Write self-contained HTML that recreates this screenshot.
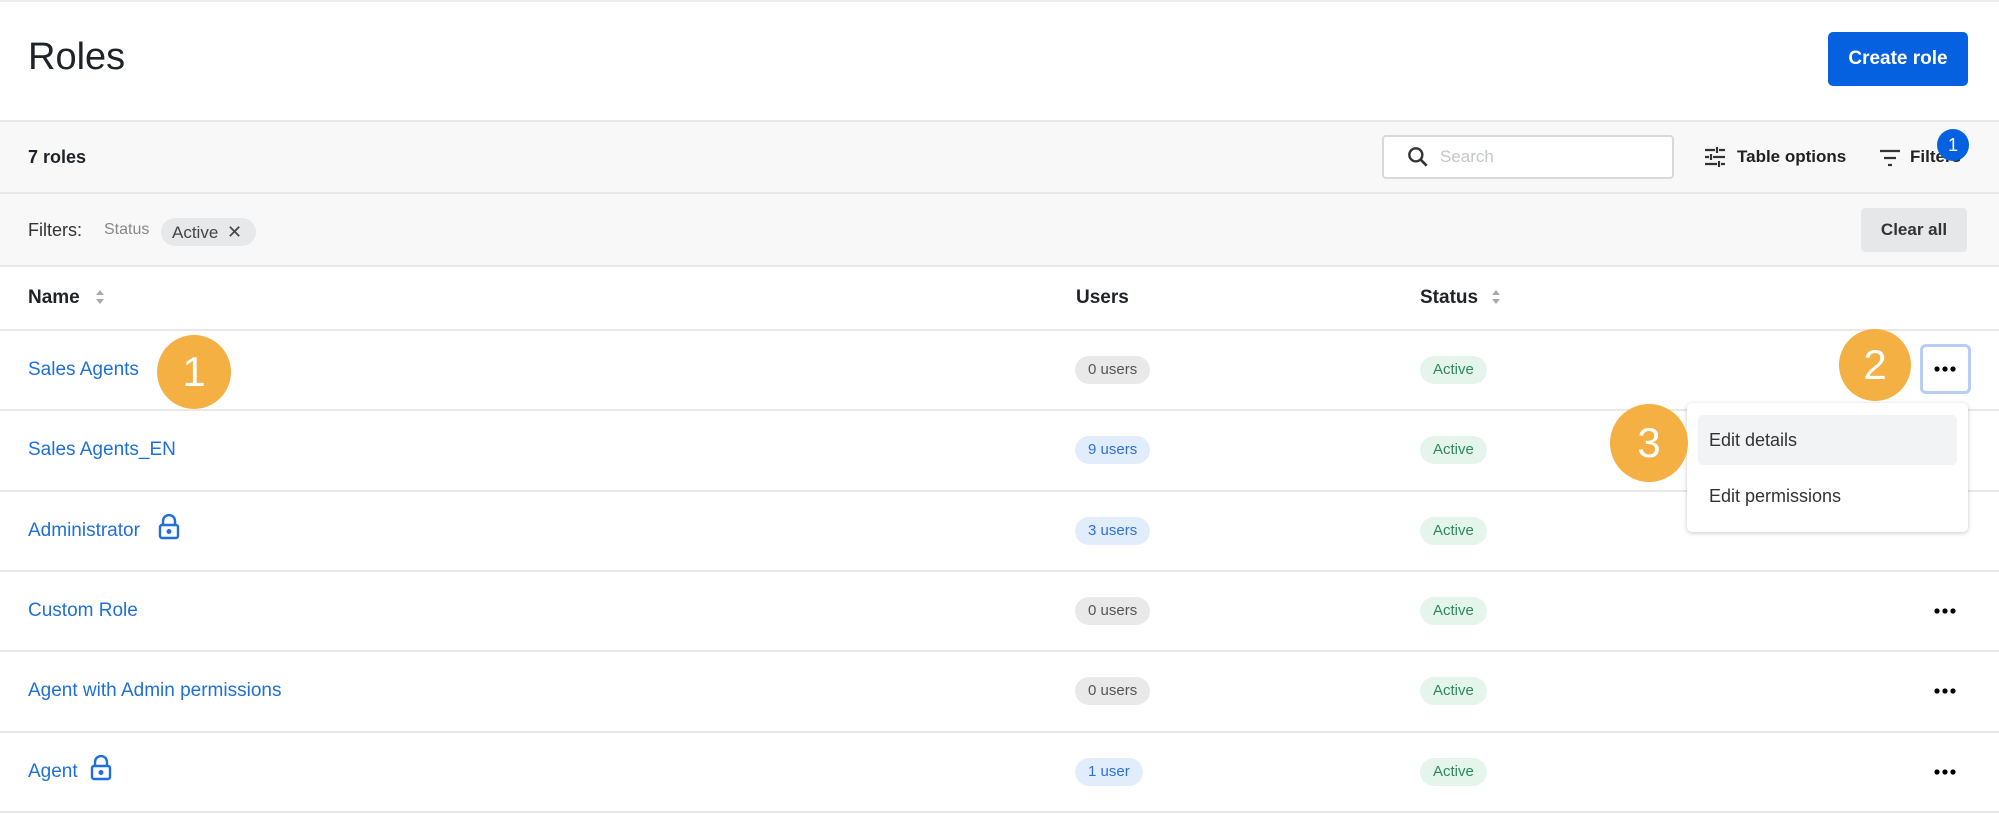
<!DOCTYPE html>
<html><head><meta charset="utf-8"><style>
*{box-sizing:border-box;margin:0;padding:0}
body{width:1999px;height:823px;background:#fff;font-family:"Liberation Sans",sans-serif;position:relative;overflow:hidden;color:#1f2328}
.a{position:absolute}
.hl{position:absolute;left:0;width:1999px;height:2px;background:#e8e8e8}
.link{color:#1f6fd8;font-size:19px}
.pill{position:absolute;height:28px;line-height:28px;border-radius:14px;font-size:15px;padding:0 13px}
.g{background:#e9e9ea;color:#555}
.b{background:#e2edfc;color:#2f6fdb}
.act{background:#e5f5ec;color:#2b8a5a}
.dots{position:absolute;left:1934px}
.badge{position:absolute;border-radius:50%;background:#f4b043;color:#fff;text-align:center;font-size:42px}
</style></head><body>
<div class="hl" style="top:0;height:2px;background:#eee"></div>
<div class="a" style="left:28px;top:36px;font-size:38px;color:#1f2328">Roles</div>
<div class="a" style="left:1828px;top:32px;width:140px;height:54px;background:#0561e0;border-radius:5px;color:#fff;font-size:19px;font-weight:bold;line-height:54px;text-align:center">Create role</div>

<div class="a" style="left:0;top:121px;width:1999px;height:145px;background:#f8f8f8"></div>
<div class="hl" style="top:120px"></div>
<div class="hl" style="top:192px"></div>
<div class="hl" style="top:265px"></div>
<div class="a" style="left:28px;top:147px;font-size:18px;font-weight:bold">7 roles</div>
<div class="a" style="left:1382px;top:135px;width:292px;height:44px;background:#fff;border:2px solid #d6d8db;border-radius:4px"></div>
<svg class="a" style="left:1405px;top:144px" width="26" height="26" viewBox="0 0 24 24"><circle cx="10" cy="10" r="6" fill="none" stroke="#333" stroke-width="2.2"/><path d="M14.5 14.5L20 20" stroke="#333" stroke-width="2.4"/></svg>
<div class="a" style="left:1440px;top:147px;font-size:17px;color:#c4c6c9">Search</div>
<svg class="a" style="left:1703px;top:145px" width="24" height="24" viewBox="0 0 24 24" stroke="#333" stroke-width="2.2" fill="none"><path d="M2 5h10M16 5h6M14 2v6M2 12h4M10 12h12M8 9v6M2 19h12M18 19h4M16 16v6"/></svg>
<div class="a" style="left:1737px;top:147px;font-size:17px;font-weight:bold;color:#222">Table options</div>
<svg class="a" style="left:1878px;top:147px" width="24" height="22" viewBox="0 0 24 22" stroke="#333" stroke-width="2.2"><path d="M2 4h20M6 11h12M10 18h4"/></svg>
<div class="a" style="left:1910px;top:147px;font-size:17px;font-weight:bold;color:#222">Filters</div>
<div class="a" style="left:1937px;top:129px;width:32px;height:32px;border-radius:50%;background:#0561e0;color:#fff;font-size:18px;line-height:32px;text-align:center">1</div>

<div class="a" style="left:28px;top:220px;font-size:18px;color:#333">Filters:</div>
<div class="a" style="left:104px;top:221px;font-size:16px;color:#888">Status</div>
<div class="a" style="left:161px;top:218px;width:95px;height:28px;border-radius:14px;background:#e7e8ea;font-size:17px;color:#444;line-height:28px;padding-left:11px">Active <span style="font-size:18px;margin-left:4px">✕</span></div>
<div class="a" style="left:1861px;top:208px;width:106px;height:44px;border-radius:4px;background:#e6e7e9;font-size:17px;font-weight:bold;color:#333;line-height:44px;text-align:center">Clear all</div>

<div class="a" style="left:28px;top:287px;font-size:19px;font-weight:bold">Name</div>
<svg class="a" style="left:95px;top:289px" width="10" height="16" viewBox="0 0 10 16" fill="#aaa"><path d="M5 1L9 6H1zM5 15L9 10H1z"/></svg>
<div class="a" style="left:1076px;top:287px;font-size:19px;font-weight:bold">Users</div>
<div class="a" style="left:1420px;top:287px;font-size:19px;font-weight:bold">Status</div>
<svg class="a" style="left:1491px;top:289px" width="10" height="16" viewBox="0 0 10 16" fill="#aaa"><path d="M5 1L9 6H1zM5 15L9 10H1z"/></svg>
<div class="hl" style="top:329px"></div>
<div class="hl" style="top:409px"></div>
<div class="hl" style="top:490px"></div>
<div class="hl" style="top:570px"></div>
<div class="hl" style="top:650px"></div>
<div class="hl" style="top:731px"></div>
<div class="hl" style="top:811px"></div>

<div class="a link" style="left:28px;top:359px">Sales Agents</div>
<div class="a link" style="left:28px;top:439px">Sales Agents_EN</div>
<div class="a link" style="left:28px;top:520px">Administrator</div>
<svg class="a" style="left:158px;top:514px" width="22" height="26" viewBox="0 0 22 26" fill="none" stroke="#1f6fd8" stroke-width="2.4"><path d="M5 11V7a6 6 0 0 1 12 0v4"/><rect x="2" y="11" width="18" height="13" rx="2"/><circle cx="11" cy="17.5" r="1.3" fill="#1f6fd8"/></svg>
<div class="a link" style="left:28px;top:600px">Custom Role</div>
<div class="a link" style="left:28px;top:680px">Agent with Admin permissions</div>
<div class="a link" style="left:28px;top:761px">Agent</div>
<svg class="a" style="left:90px;top:755px" width="22" height="26" viewBox="0 0 22 26" fill="none" stroke="#1f6fd8" stroke-width="2.4"><path d="M5 11V7a6 6 0 0 1 12 0v4"/><rect x="2" y="11" width="18" height="13" rx="2"/><circle cx="11" cy="17.5" r="1.3" fill="#1f6fd8"/></svg>

<div class="pill g" style="left:1075px;top:356px">0 users</div>
<div class="pill b" style="left:1075px;top:436px">9 users</div>
<div class="pill b" style="left:1075px;top:517px">3 users</div>
<div class="pill g" style="left:1075px;top:597px">0 users</div>
<div class="pill g" style="left:1075px;top:677px">0 users</div>
<div class="pill b" style="left:1075px;top:758px">1 user</div>

<div class="pill act" style="left:1420px;top:356px">Active</div>
<div class="pill act" style="left:1420px;top:436px">Active</div>
<div class="pill act" style="left:1420px;top:517px">Active</div>
<div class="pill act" style="left:1420px;top:597px">Active</div>
<div class="pill act" style="left:1420px;top:677px">Active</div>
<div class="pill act" style="left:1420px;top:758px">Active</div>

<div class="a" style="left:1920px;top:344px;width:51px;height:50px;border:3px solid #b7cdf5;border-radius:6px;background:#fff"></div>
<svg class="dots" style="top:366px" width="22" height="6"><circle cx="3" cy="3" r="2.6"/><circle cx="11" cy="3" r="2.6"/><circle cx="19" cy="3" r="2.6"/></svg>
<svg class="dots" style="top:608px" width="22" height="6"><circle cx="3" cy="3" r="2.6"/><circle cx="11" cy="3" r="2.6"/><circle cx="19" cy="3" r="2.6"/></svg>
<svg class="dots" style="top:688px" width="22" height="6"><circle cx="3" cy="3" r="2.6"/><circle cx="11" cy="3" r="2.6"/><circle cx="19" cy="3" r="2.6"/></svg>
<svg class="dots" style="top:769px" width="22" height="6"><circle cx="3" cy="3" r="2.6"/><circle cx="11" cy="3" r="2.6"/><circle cx="19" cy="3" r="2.6"/></svg>

<div class="a" style="left:1687px;top:403px;width:281px;height:129px;background:#fff;border-radius:5px;box-shadow:0 1px 5px rgba(0,0,0,.22)"></div>
<div class="a" style="left:1698px;top:415px;width:259px;height:50px;background:#f2f3f5;border-radius:5px"></div>
<div class="a" style="left:1709px;top:430px;font-size:18px;color:#333">Edit details</div>
<div class="a" style="left:1709px;top:486px;font-size:18px;color:#333">Edit permissions</div>

<div class="badge" style="left:157px;top:335px;width:74px;height:74px;line-height:74px">1</div>
<div class="badge" style="left:1839px;top:329px;width:72px;height:72px;line-height:72px">2</div>
<div class="badge" style="left:1610px;top:404px;width:78px;height:78px;line-height:78px">3</div>
</body></html>
